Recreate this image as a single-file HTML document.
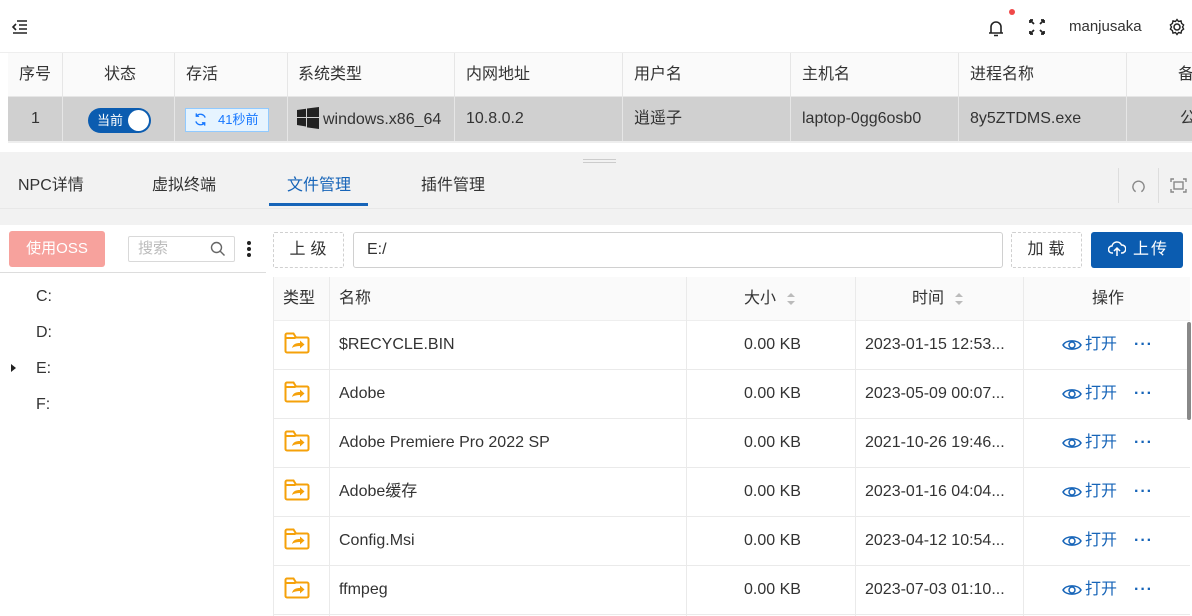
<!DOCTYPE html>
<html><head><meta charset="utf-8"><style>
*{box-sizing:border-box;margin:0;padding:0}
body{width:1192px;height:616px;overflow:hidden;background:#fff;font-family:"Liberation Sans","Noto Sans CJK SC",sans-serif;font-size:16px;color:#333;position:relative}
.a{position:absolute;line-height:20px;white-space:nowrap}
.cell{position:absolute;border-right:1px solid #e6e6e6}
.blue{color:#1664b8}
</style></head><body>
<!-- header -->
<svg class="a" style="left:12px;top:19px" width="16" height="16" viewBox="0 0 16 16"><path d="M5 2h10M7 6h8M7 10h8M1 14h14M4 5L1 8l3 3" stroke="#222" stroke-width="1.6" fill="none"/></svg>
<svg class="a" style="left:987px;top:18px" width="18" height="20" viewBox="0 0 18 20"><path d="M4 15V9a5 5 0 0110 0v6M2 15h14M7 17.5h4" stroke="#222" stroke-width="1.6" fill="none"/></svg>
<div class="a" style="left:1009px;top:9px;width:6px;height:6px;border-radius:3px;background:#f04848"></div>
<svg class="a" style="left:1029px;top:19px" width="16" height="16" viewBox="0 0 16 16"><path d="M1 1l4 4M1 1v3M1 1h3M15 1l-4 4M15 1v3M15 1h-3M1 15l4-4M1 15v-3M1 15h3M15 15l-4-4M15 15v-3M15 15h-3" stroke="#222" stroke-width="1.8" fill="none"/></svg>
<div class="a" style="left:1069px;top:17px;font-size:15px;color:#333">manjusaka</div>
<svg class="a" style="left:1168px;top:18px" width="18" height="18" viewBox="0 0 18 18"><circle cx="9" cy="9" r="3" stroke="#222" stroke-width="1.5" fill="none"/><path d="M9 1.5l1.5 2 2.5-.6.6 2.5 2 1.5-1.1 2.1 1.1 2.1-2 1.5-.6 2.5-2.5-.6L9 16.5l-1.5-2-2.5.6-.6-2.5-2-1.5L3.5 9 2.4 6.9l2-1.5.6-2.5 2.5.6z" stroke="#222" stroke-width="1.4" fill="none"/></svg>
<div class="a" style="left:0;top:52px;width:1192px;height:1px;background:#eee"></div>
<!-- npc table -->
<div class="a" style="left:8px;top:53px;width:1184px;height:44px;background:#fafafa;border-bottom:1px solid #e6e6e6"></div>
<div class="a" style="left:8px;top:97px;width:1184px;height:44px;background:#d0d0d0"></div>
<div class="a" style="left:8px;top:141px;width:1184px;height:2px;background:#eee"></div>
<div class="cell" style="left:8px;top:53px;width:55px;height:88px"></div>
<div class="cell" style="left:63px;top:53px;width:112px;height:88px"></div>
<div class="cell" style="left:175px;top:53px;width:113px;height:88px"></div>
<div class="cell" style="left:288px;top:53px;width:167px;height:88px"></div>
<div class="cell" style="left:455px;top:53px;width:168px;height:88px"></div>
<div class="cell" style="left:623px;top:53px;width:168px;height:88px"></div>
<div class="cell" style="left:791px;top:53px;width:168px;height:88px"></div>
<div class="cell" style="left:959px;top:53px;width:168px;height:88px"></div>
<div class="a" style="left:19px;top:65px">序号</div>
<div class="a" style="left:104px;top:65px">状态</div>
<div class="a" style="left:186px;top:65px">存活</div>
<div class="a" style="left:298px;top:65px">系统类型</div>
<div class="a" style="left:466px;top:65px">内网地址</div>
<div class="a" style="left:634px;top:65px">用户名</div>
<div class="a" style="left:802px;top:65px">主机名</div>
<div class="a" style="left:970px;top:65px">进程名称</div>
<div class="a" style="left:1178px;top:65px">备</div>
<div class="a" style="left:31px;top:109px">1</div>
<div class="a" style="left:88px;top:108px;width:63px;height:25px;border-radius:13px;background:#0b5cb0;color:#fff;font-size:13px;line-height:25px;padding-left:9px">当前<div class="a" style="left:40px;top:2px;width:21px;height:21px;border-radius:11px;background:#fff"></div></div>
<div class="a" style="left:185px;top:108px;width:84px;height:24px;background:#e6f4ff;border:1px solid #91caff;color:#1677ff;font-size:13px;line-height:22px;padding-left:32px">41秒前</div>
<svg class="a" style="left:193px;top:112px" width="15" height="15" viewBox="0 0 16 16"><path d="M13 6A5.5 5.5 0 003.5 4.5M3 10a5.5 5.5 0 009.5 1.5M3.5 1.5v3h3M12.5 14.5v-3h-3" stroke="#1677ff" stroke-width="1.4" fill="none"/></svg>
<svg class="a" style="left:297px;top:107px" width="22" height="22" viewBox="0 0 22 22"><path d="M0 3l9-1.3V10H0zM10 1.5L22 0v10H10zM0 11h9v8.5L0 18zM10 11h12v11l-12-1.6z" fill="#222"/></svg>
<div class="a" style="left:323px;top:110px">windows.x86_64</div>
<div class="a" style="left:466px;top:109px">10.8.0.2</div>
<div class="a" style="left:634px;top:109px">逍遥子</div>
<div class="a" style="left:802px;top:109px">laptop-0gg6osb0</div>
<div class="a" style="left:970px;top:109px">8y5ZTDMS.exe</div>
<div class="a" style="left:1180px;top:109px">公</div>
<!-- tabs band -->
<div class="a" style="left:0;top:152px;width:1192px;height:73px;background:#f2f2f2"></div>
<div class="a" style="left:583px;top:159px;width:33px;height:1px;background:#ccc"></div>
<div class="a" style="left:583px;top:162px;width:33px;height:1px;background:#ccc"></div>
<div class="a" style="left:18px;top:176px">NPC详情</div>
<div class="a" style="left:152px;top:176px">虚拟终端</div>
<div class="a blue" style="left:287px;top:176px">文件管理</div>
<div class="a" style="left:421px;top:176px">插件管理</div>
<div class="a" style="left:269px;top:203px;width:99px;height:3px;background:#1664b8"></div>
<div class="a" style="left:0;top:208px;width:1192px;height:1px;background:#e8e8e8"></div>
<div class="a" style="left:1118px;top:168px;width:1px;height:35px;background:#ddd"></div>
<div class="a" style="left:1158px;top:168px;width:1px;height:35px;background:#ddd"></div>
<svg class="a" style="left:1131px;top:179px" width="15" height="15" viewBox="0 0 16 16"><path d="M5 13.5A6 6 0 1111 13.5" stroke="#888" stroke-width="1.5" fill="none"/></svg>
<svg class="a" style="left:1170px;top:178px" width="17" height="15" viewBox="0 0 17 15"><path d="M1 4V1h3M13 1h3v3M16 11v3h-3M4 14H1v-3" stroke="#888" stroke-width="1.4" fill="none"/><rect x="4" y="4" width="9" height="7" stroke="#888" stroke-width="1.4" fill="none"/></svg>
<!-- left panel -->
<div class="a" style="left:9px;top:231px;width:96px;height:36px;background:#f7a29d;border-radius:3px;color:#fff;font-size:15px;text-align:center;line-height:36px">使用OSS</div>
<div class="a" style="left:128px;top:236px;width:107px;height:26px;border:1px solid #d9d9d9;border-radius:2px;color:#bbb;font-size:15px;line-height:24px;padding-left:9px">搜索</div>
<svg class="a" style="left:210px;top:241px" width="16" height="16" viewBox="0 0 16 16"><circle cx="6.5" cy="6.5" r="5" stroke="#666" stroke-width="1.4" fill="none"/><path d="M10 10l4.5 4.5" stroke="#666" stroke-width="1.4"/></svg>
<div class="a" style="left:247px;top:241px;width:4px;height:4px;border-radius:2px;background:#222;box-shadow:0 6px 0 #222,0 12px 0 #222"></div>
<div class="a" style="left:0;top:272px;width:266px;height:1px;background:#ddd"></div>
<div class="a" style="left:36px;top:287px">C:</div>
<div class="a" style="left:36px;top:323px">D:</div>
<div class="a" style="left:11px;top:364px;width:0;height:0;border-left:5px solid #222;border-top:4px solid transparent;border-bottom:4px solid transparent"></div>
<div class="a" style="left:36px;top:359px">E:</div>
<div class="a" style="left:36px;top:395px">F:</div>
<!-- toolbar -->
<div class="a" style="left:273px;top:232px;width:71px;height:36px;border:1px dashed #d0d0d0;border-radius:2px;text-align:center;line-height:34px;letter-spacing:5px;padding-left:4px">上级</div>
<div class="a" style="left:353px;top:232px;width:650px;height:36px;border:1px solid #d0d0d0;border-radius:3px;line-height:34px;padding-left:13px">E:/</div>
<div class="a" style="left:1011px;top:232px;width:71px;height:36px;border:1px dashed #d0d0d0;border-radius:2px;text-align:center;line-height:34px;letter-spacing:5px;padding-left:4px">加载</div>
<div class="a" style="left:1091px;top:232px;width:92px;height:36px;background:#0b5cb0;border-radius:3px;color:#fff;line-height:36px;padding-left:42px;letter-spacing:2px">上传</div>
<svg class="a" style="left:1108px;top:241px" width="18" height="16" viewBox="0 0 18 16"><path d="M5 12H4a3.5 3.5 0 010-7 5 5 0 019.5-1A3.8 3.8 0 0114 12h-1M9 15V7M6 10l3-3 3 3" stroke="#fff" stroke-width="1.5" fill="none"/></svg>
<!-- file table -->
<div class="a" style="left:273px;top:277px;width:917px;height:44px;background:#fafafa;border-bottom:1px solid #eee"></div>
<div id="ft"></div>
<div class="a" style="left:283px;top:289px">类型</div>
<div class="a" style="left:339px;top:289px">名称</div>
<div class="a" style="left:744px;top:289px">大小</div>
<div class="a" style="left:912px;top:289px">时间</div>
<div class="a" style="left:1092px;top:289px">操作</div>
<svg class="a" style="left:786px;top:292px" width="10" height="14"><path d="M1 5l4-4 4 4zM1 9l4 4 4-4z" fill="#bbb"/></svg>
<svg class="a" style="left:954px;top:292px" width="10" height="14"><path d="M1 5l4-4 4 4zM1 9l4 4 4-4z" fill="#bbb"/></svg>
<div class="a" style="left:1187px;top:322px;width:4px;height:98px;border-radius:2px;background:#888"></div>
<script>
var rows=[["$RECYCLE.BIN","2023-01-15 12:53..."],["Adobe","2023-05-09 00:07..."],["Adobe Premiere Pro 2022 SP","2021-10-26 19:46..."],["Adobe缓存","2023-01-16 04:04..."],["Config.Msi","2023-04-12 10:54..."],["ffmpeg","2023-07-03 01:10..."]];
var h="";
[273,329,686,855,1023].forEach(function(x){h+='<div class="a" style="left:'+x+'px;top:277px;width:1px;height:339px;background:#eaeaea"></div>';});
rows.forEach(function(r,i){var t=321+i*49;
h+='<div class="a" style="left:273px;top:'+(t+48)+'px;width:917px;height:1px;background:#eaeaea"></div>';
h+='<svg class="a" style="left:284px;top:'+(t+11)+'px" width="26" height="22" viewBox="0 0 26 22"><path d="M1.5 3V19a1.5 1.5 0 001.5 1.5h20a1.5 1.5 0 001.5-1.5V7a1.5 1.5 0 00-1.5-1.5H12L9.5 1.5H3A1.5 1.5 0 001.5 3zM1.5 6h10" stroke="#f5a10a" stroke-width="2" fill="none"/><path d="M8 16c1-4 4-5 8-5V8.5l4.5 4-4.5 4V14c-3 0-6 .5-8 2z" fill="#f5a10a"/></svg>';
h+='<div class="a" style="left:339px;top:'+(t+14)+'px">'+r[0]+'</div>';
h+='<div class="a" style="left:744px;top:'+(t+14)+'px">0.00 KB</div>';
h+='<div class="a" style="left:865px;top:'+(t+14)+'px">'+r[1]+'</div>';
h+='<svg class="a" style="left:1062px;top:'+(t+17)+'px" width="20" height="14" viewBox="0 0 20 14"><path d="M1 7C4 1.5 16 1.5 19 7 16 12.5 4 12.5 1 7z" stroke="#1664b8" stroke-width="1.5" fill="none"/><circle cx="10" cy="7" r="3" stroke="#1664b8" stroke-width="1.5" fill="none"/></svg>';
h+='<div class="a blue" style="left:1085px;top:'+(t+14)+'px">打开</div>';
h+='<div class="a blue" style="left:1134px;top:'+(t+14)+'px;font-weight:bold;letter-spacing:1px">···</div>';
});
document.getElementById("ft").innerHTML=h;
</script>
</body></html>
